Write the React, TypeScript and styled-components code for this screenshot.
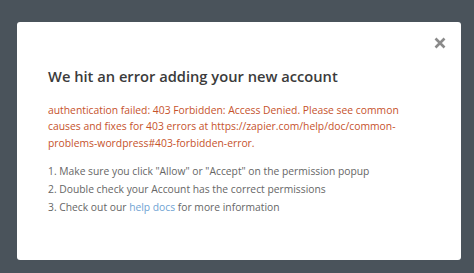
import React from "react";
import styled, { createGlobalStyle } from "styled-components";

const Global = createGlobalStyle`
  html, body { margin: 0; padding: 0; }
  body {
    width: 474px;
    height: 273px;
    overflow: hidden;
    background: #4a535b;
    font-family: "Open Sans", sans-serif;
  }
`;

const Overlay = styled.div`
  box-sizing: border-box;
  width: 474px;
  height: 273px;
  padding: 22px 13px 13px 17px;
`;

const Modal = styled.div`
  position: relative;
  box-sizing: border-box;
  width: 444px;
  height: 238px;
  background: #ffffff;
  border-radius: 3px;
  padding: 44px 31px 0 31px;
`;

const Close = styled.button`
  position: absolute;
  top: 13px;
  right: 13px;
  width: 16px;
  height: 16px;
  padding: 0;
  border: 0;
  background: transparent;
  display: flex;
  align-items: center;
  justify-content: center;
`;

const Title = styled.h2`
  margin: 0 0 16px;
  font-size: 14.7px;
  line-height: 20px;
  font-weight: 600;
  color: #3b3b3b;
`;

const ErrorText = styled.p`
  margin: 0 0 11px;
  font-size: 10.35px;
  line-height: 16.3px;
  color: #c6522b;
`;

const Steps = styled.ol`
  margin: 0;
  padding: 0;
  list-style: none;
`;

const Step = styled.li`
  font-size: 10.3px;
  line-height: 18px;
  color: #666666;
`;

const Link = styled.a`
  color: #6fa3d3;
  text-decoration: none;
`;

export default function App() {
  return (
    <>
      <Global />
      <Overlay>
        <Modal>
          <Close aria-label="Close">
            <svg width="12" height="12" viewBox="0 0 12 12">
              <path d="M1.5 1.5 L10.5 10.5 M10.5 1.5 L1.5 10.5" stroke="#8a8a8a" strokeWidth="2.6" strokeLinecap="butt" />
            </svg>
          </Close>
          <Title>We hit an error adding your new account</Title>
          <ErrorText>
            authentication failed: 403 Forbidden: Access Denied. Please see common causes and fixes for 403 errors at https://zapier.com/help/doc/common-problems-wordpress#403-forbidden-error.
          </ErrorText>
          <Steps>
            <Step>1. Make sure you click "Allow" or "Accept" on the permission popup</Step>
            <Step>2. Double check your Account has the correct permissions</Step>
            <Step>
              3. Check out our <Link href="#">help docs</Link> for more information
            </Step>
          </Steps>
        </Modal>
      </Overlay>
    </>
  );
}
